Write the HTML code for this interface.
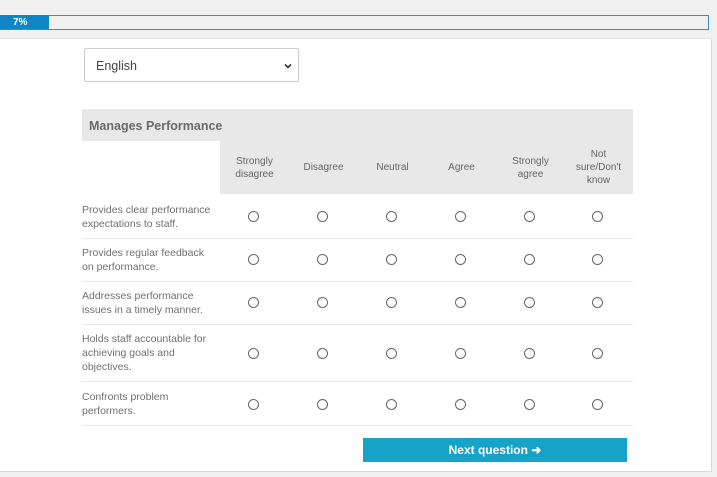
<!DOCTYPE html>
<html><head><style>
body{margin:0;width:717px;height:477px;background:#f0f0f0;font-family:"Liberation Sans",sans-serif;position:relative;overflow:hidden;color:#6b6b6b}
.a{position:absolute}
.r{position:absolute;width:9px;height:9px;border:1.5px solid #666;border-radius:50%;background:#fff}
.lbl{position:absolute;left:82px;font-size:10.5px;line-height:14px;color:#707070}
.ch{position:absolute;top:141px;height:53px;width:69px;display:flex;align-items:center;justify-content:center;text-align:center;font-size:10px;line-height:13px;color:#666}
.ln{position:absolute;left:82px;width:551px;height:1px;background:#e8e8e8}
</style></head><body>
<div class="a" style="left:0;top:15px;width:708px;height:13px;border:1px solid #3a8fb8;border-left:none;background:#f0f0f0"></div>
<div class="a" style="left:0;top:15px;width:49px;height:14px;background:#0e87c4;color:#fff;font-size:10px;font-weight:bold;line-height:15px;padding-left:13px;box-sizing:border-box">7%</div>
<div class="a" style="left:0;top:38px;width:711px;height:432px;background:#fff;border-right:1px solid #d8d8d8;border-bottom:1px solid #d8d8d8;border-top:1px solid #e4e4e4"></div>
<div class="a" style="left:84px;top:48px;width:215px;height:34px;border:1px solid #ccc;border-radius:2px;background:#fff;font-size:12.5px;line-height:34px;padding-left:11px;box-sizing:border-box;color:#444">English<svg class="a" style="right:6px;top:14px" width="8" height="6" viewBox="0 0 8 6"><path d="M1 1.5L4 4.5L7 1.5" fill="none" stroke="#333" stroke-width="1.6"/></svg></div>
<div class="a" style="left:82px;top:109px;width:551px;height:32px;background:#e8e8e8;font-size:12.5px;font-weight:bold;line-height:34px;padding-left:7px;box-sizing:border-box;color:#6a6a6a">Manages Performance</div>
<div class="a" style="left:220px;top:141px;width:413px;height:53px;background:#e8e8e8"></div>
<div class="ch" style="left:220px">Strongly<br>disagree</div>
<div class="ch" style="left:289px">Disagree</div>
<div class="ch" style="left:358px">Neutral</div>
<div class="ch" style="left:427px">Agree</div>
<div class="ch" style="left:496px">Strongly<br>agree</div>
<div class="ch" style="left:564px">Not<br>sure/Don't<br>know</div>
<div class="lbl" style="top:203px">Provides clear performance<br>expectations to staff.</div>
<div class="lbl" style="top:246px">Provides regular feedback<br>on performance.</div>
<div class="lbl" style="top:289px">Addresses performance<br>issues in a timely manner.</div>
<div class="lbl" style="top:332px">Holds staff accountable for<br>achieving goals and<br>objectives.</div>
<div class="lbl" style="top:390px">Confronts problem<br>performers.</div>
<div class="ln" style="top:238px"></div><div class="ln" style="top:281px"></div><div class="ln" style="top:324px"></div><div class="ln" style="top:381px"></div><div class="ln" style="top:425px"></div>
<div id="radios"></div>
<div class="a" style="left:363px;top:438px;width:264px;height:24px;background:#17a2c8;color:#fff;font-size:12px;font-weight:bold;text-align:center;line-height:24px">Next question &#10140;</div>
<script>
var ys=[217,260,303,354,405],xs=[254,323,392,461,530,598],h='';
ys.forEach(function(y){xs.forEach(function(x){h+='<div class="r" style="left:'+(x-6)+'px;top:'+(y-6)+'px"></div>';});});
document.getElementById('radios').innerHTML=h;
</script>
</body></html>
